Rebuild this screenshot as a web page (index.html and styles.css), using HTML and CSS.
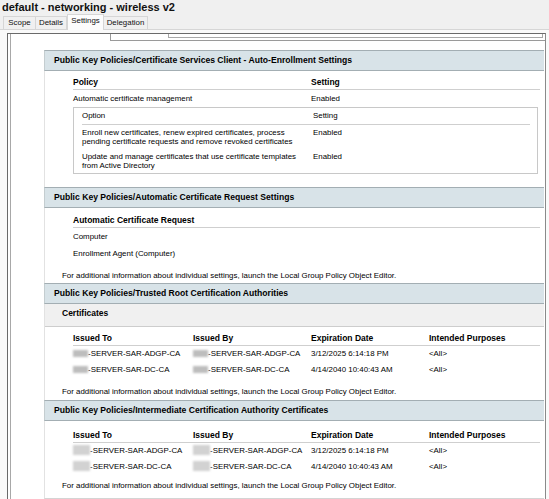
FILE: index.html
```html
<!DOCTYPE html>
<html>
<head>
<meta charset="utf-8">
<link rel="stylesheet" href="styles.css">
</head>
<body>
<div class="title">default - networking - wireless v2</div>
<div class="tabs">
  <div class="tab t-scope">Scope</div>
  <div class="tab t-details">Details</div>
  <div class="tab t-settings sel">Settings</div>
  <div class="tab t-deleg">Delegation</div>
</div>
<div class="panel">
  <div class="view">
    <div class="view-inner">
      <div class="remnant"><div class="remnant-in"></div></div>

      <div class="section">
        <div class="shead">Public Key Policies/Certificate Services Client - Auto-Enrollment Settings</div>
        <div class="sbody b1">
          <div class="ptable">
            <div class="th">Policy</div><div class="th">Setting</div>
            <div class="td r1">Automatic certificate management</div><div class="td r1">Enabled</div>
          </div>
          <div class="nbox">
            <div class="nhead">
              <div class="nh">Option</div><div class="nh">Setting</div>
            </div>
            <div class="nrow">
              <div>Enroll new certificates, renew expired certificates, process pending certificate requests and remove revoked certificates</div>
              <div>Enabled</div>
            </div>
            <div class="nrow">
              <div>Update and manage certificates that use certificate templates from Active Directory</div>
              <div>Enabled</div>
            </div>
          </div>
        </div>
      </div>

      <div class="section">
        <div class="shead">Public Key Policies/Automatic Certificate Request Settings</div>
        <div class="sbody b2">
          <div class="th1">Automatic Certificate Request</div>
          <div class="lrow">Computer</div>
          <div class="lrow">Enrollment Agent (Computer)</div>
          <div class="foot">For additional information about individual settings, launch the Local Group Policy Object Editor.</div>
        </div>
      </div>

      <div class="section">
        <div class="shead">Public Key Policies/Trusted Root Certification Authorities</div>
        <div class="sbody b3">
          <div class="band">Certificates</div>
          <div class="ctable">
            <div class="th">Issued To</div><div class="th">Issued By</div><div class="th">Expiration Date</div><div class="th">Intended Purposes</div>
            <div class="td"><span class="blur"></span>-SERVER-SAR-ADGP-CA</div><div class="td"><span class="blur"></span>-SERVER-SAR-ADGP-CA</div><div class="td">3/12/2025 6:14:18 PM</div><div class="td">&lt;All&gt;</div>
            <div class="td"><span class="blur"></span>-SERVER-SAR-DC-CA</div><div class="td"><span class="blur"></span>-SERVER-SAR-DC-CA</div><div class="td">4/14/2040 10:40:43 AM</div><div class="td">&lt;All&gt;</div>
          </div>
          <div class="foot">For additional information about individual settings, launch the Local Group Policy Object Editor.</div>
        </div>
      </div>

      <div class="section">
        <div class="shead">Public Key Policies/Intermediate Certification Authority Certificates</div>
        <div class="sbody b4">
          <div class="ctable">
            <div class="th">Issued To</div><div class="th">Issued By</div><div class="th">Expiration Date</div><div class="th">Intended Purposes</div>
            <div class="td"><span class="blur lt"></span>-SERVER-SAR-ADGP-CA</div><div class="td"><span class="blur lt"></span>-SERVER-SAR-ADGP-CA</div><div class="td">3/12/2025 6:14:18 PM</div><div class="td">&lt;All&gt;</div>
            <div class="td"><span class="blur lt"></span>-SERVER-SAR-DC-CA</div><div class="td"><span class="blur lt"></span>-SERVER-SAR-DC-CA</div><div class="td">4/14/2040 10:40:43 AM</div><div class="td">&lt;All&gt;</div>
          </div>
          <div class="foot f4">For additional information about individual settings, launch the Local Group Policy Object Editor.</div>
        </div>
      </div>
    </div>
  </div>
</div>
</body>
</html>
```
FILE: styles.css
```css
html, body {
  margin: 0;
  padding: 0;
}
body {
  width: 549px;
  height: 499px;
  overflow: hidden;
  background: #f0f0f0;
  font-family: "Liberation Sans", Arial, sans-serif;
  font-size: 7.9px;
  color: #000;
}
.title {
  height: 14px;
  line-height: 14px;
  padding-left: 2px;
  font-size: 11px;
  font-weight: bold;
  color: #111;
}
.tabs {
  display: flex;
  align-items: flex-end;
  height: 15px;
  padding-left: 3px;
  position: relative;
  z-index: 2;
}
.tab {
  box-sizing: border-box;
  height: 13px;
  line-height: 12px;
  border: 1px solid #d6d6d6;
  border-bottom: none;
  text-align: center;
  background: #f0f0f0;
  color: #111;
}
.t-scope { width: 33px; }
.t-details { width: 31px; border-left: none; }
.t-settings { width: 37px; }
.t-deleg { width: 44px; border-left: none; }
.tab.sel {
  height: 16px;
  line-height: 12px;
  background: #fcfcfc;
  margin-bottom: -1px;
  padding-bottom: 2px;
}
.panel {
  height: 470px;
  border-top: 1px solid #d6d6d6;
  background: #fafafa;
  padding: 3px 0 0 7px;
  box-sizing: border-box;
}
.view {
  width: 539px;
  height: 470px;
  border-top: 1px solid #6a6a6a;
  border-left: 1px solid #6a6a6a;
  border-right: 1px solid #8a8a8a;
  background: #fff;
  box-sizing: border-box;
}
.view-inner {
  margin-left: 2px;
  border-left: 1px solid #a8a8a8;
  height: 100%;
  padding-left: 33px;
  box-sizing: border-box;
}
.remnant {
  margin-left: 66px;
  height: 6px;
  border-left: 1px solid #9a9a9a;
  border-bottom: 1px solid #9a9a9a;
}
.remnant-in {
  margin-left: 57px;
  margin-right: 2px;
  height: 3px;
  border-left: 1px solid #a8a8a8;
  border-bottom: 1px solid #a8a8a8;
  border-right: 1px solid #a8a8a8;
}
.remnant + .section { margin-top: 9px; }
.section {
  width: 500px;
}
.shead {
  box-sizing: border-box;
  height: 21px;
  line-height: 19px;
  border-top: 1px solid #a3aeb3;
  border-bottom: 1px solid #a3aeb3;
  border-left: 1px solid #c4cdd0;
  background: #d8e3e8;
  padding-left: 9px;
  font-weight: bold;
  font-size: 8.6px;
}
.sbody {
  border-left: 1px solid #e2e2e2;
  box-sizing: border-box;
}
.b1 { height: 116px; padding: 5px 0 0 28px; }
.b2 { height: 75px; padding: 5px 0 0 28px; }
.b3 { height: 96px; }
.b4 { height: 78px; padding-top: 7px; border-bottom: 1px solid #d4d4d4; }

.ptable {
  display: grid;
  grid-template-columns: 238px 1fr;
  margin-right: 4px;
}
.th {
  height: 13px;
  line-height: 13px;
  font-weight: bold;
  font-size: 8.5px;
  border-bottom: 1px solid #cfcfcf;
}
.td {
  height: 16px;
  line-height: 16px;
  white-space: nowrap;
}
.ptable .td.r1 { height: 17px; line-height: 17px; }

.nbox {
  width: 465px;
  box-sizing: border-box;
  border: 1px solid #c8c8c8;
  padding: 0 7px 0 8px;
}
.nhead, .nrow {
  display: grid;
  grid-template-columns: 231px 1fr;
}
.nhead {
  height: 16px;
  line-height: 16px;
  border-bottom: 1px solid #cfcfcf;
}
.nrow {
  height: 24px;
  padding-top: 3px;
  line-height: 9px;
  box-sizing: border-box;
}
.nrow > div:first-child { padding-right: 4px; }

.th1 {
  height: 14px;
  line-height: 14px;
  font-weight: bold;
  font-size: 8.5px;
  border-bottom: 1px solid #cfcfcf;
  margin-right: 4px;
}
.lrow {
  height: 17px;
  line-height: 17px;
}
.foot {
  height: 21px;
  padding-top: 7px;
  line-height: 14px;
  box-sizing: border-box;
  margin-left: -11px;
  white-space: nowrap;
}
.b3 .foot, .b4 .foot { margin-left: 17px; height: 22px; }
.b4 .foot.f4 { height: 18px; padding-top: 4px; }

.band {
  height: 23px;
  line-height: 18px;
  background: #f0f0f0;
  border-bottom: 1px solid #cdcdcd;
  padding-left: 17px;
  font-weight: bold;
  font-size: 8.5px;
  box-sizing: border-box;
}
.ctable {
  display: grid;
  grid-template-columns: 120px 118px 118px 1fr;
  margin: 0 4px 0 28px;
}
.b3 .ctable { margin-top: 4px; }
.ctable .th { height: 14px; line-height: 14px; }
.blur {
  display: inline-block;
  width: 15px;
  height: 7px;
  background: #bdbdbd;
  filter: blur(1px);
  vertical-align: -1px;
}
.blur.lt {
  width: 17px;
  height: 10px;
  background: #d2d2d2;
  vertical-align: -2px;
}
```
